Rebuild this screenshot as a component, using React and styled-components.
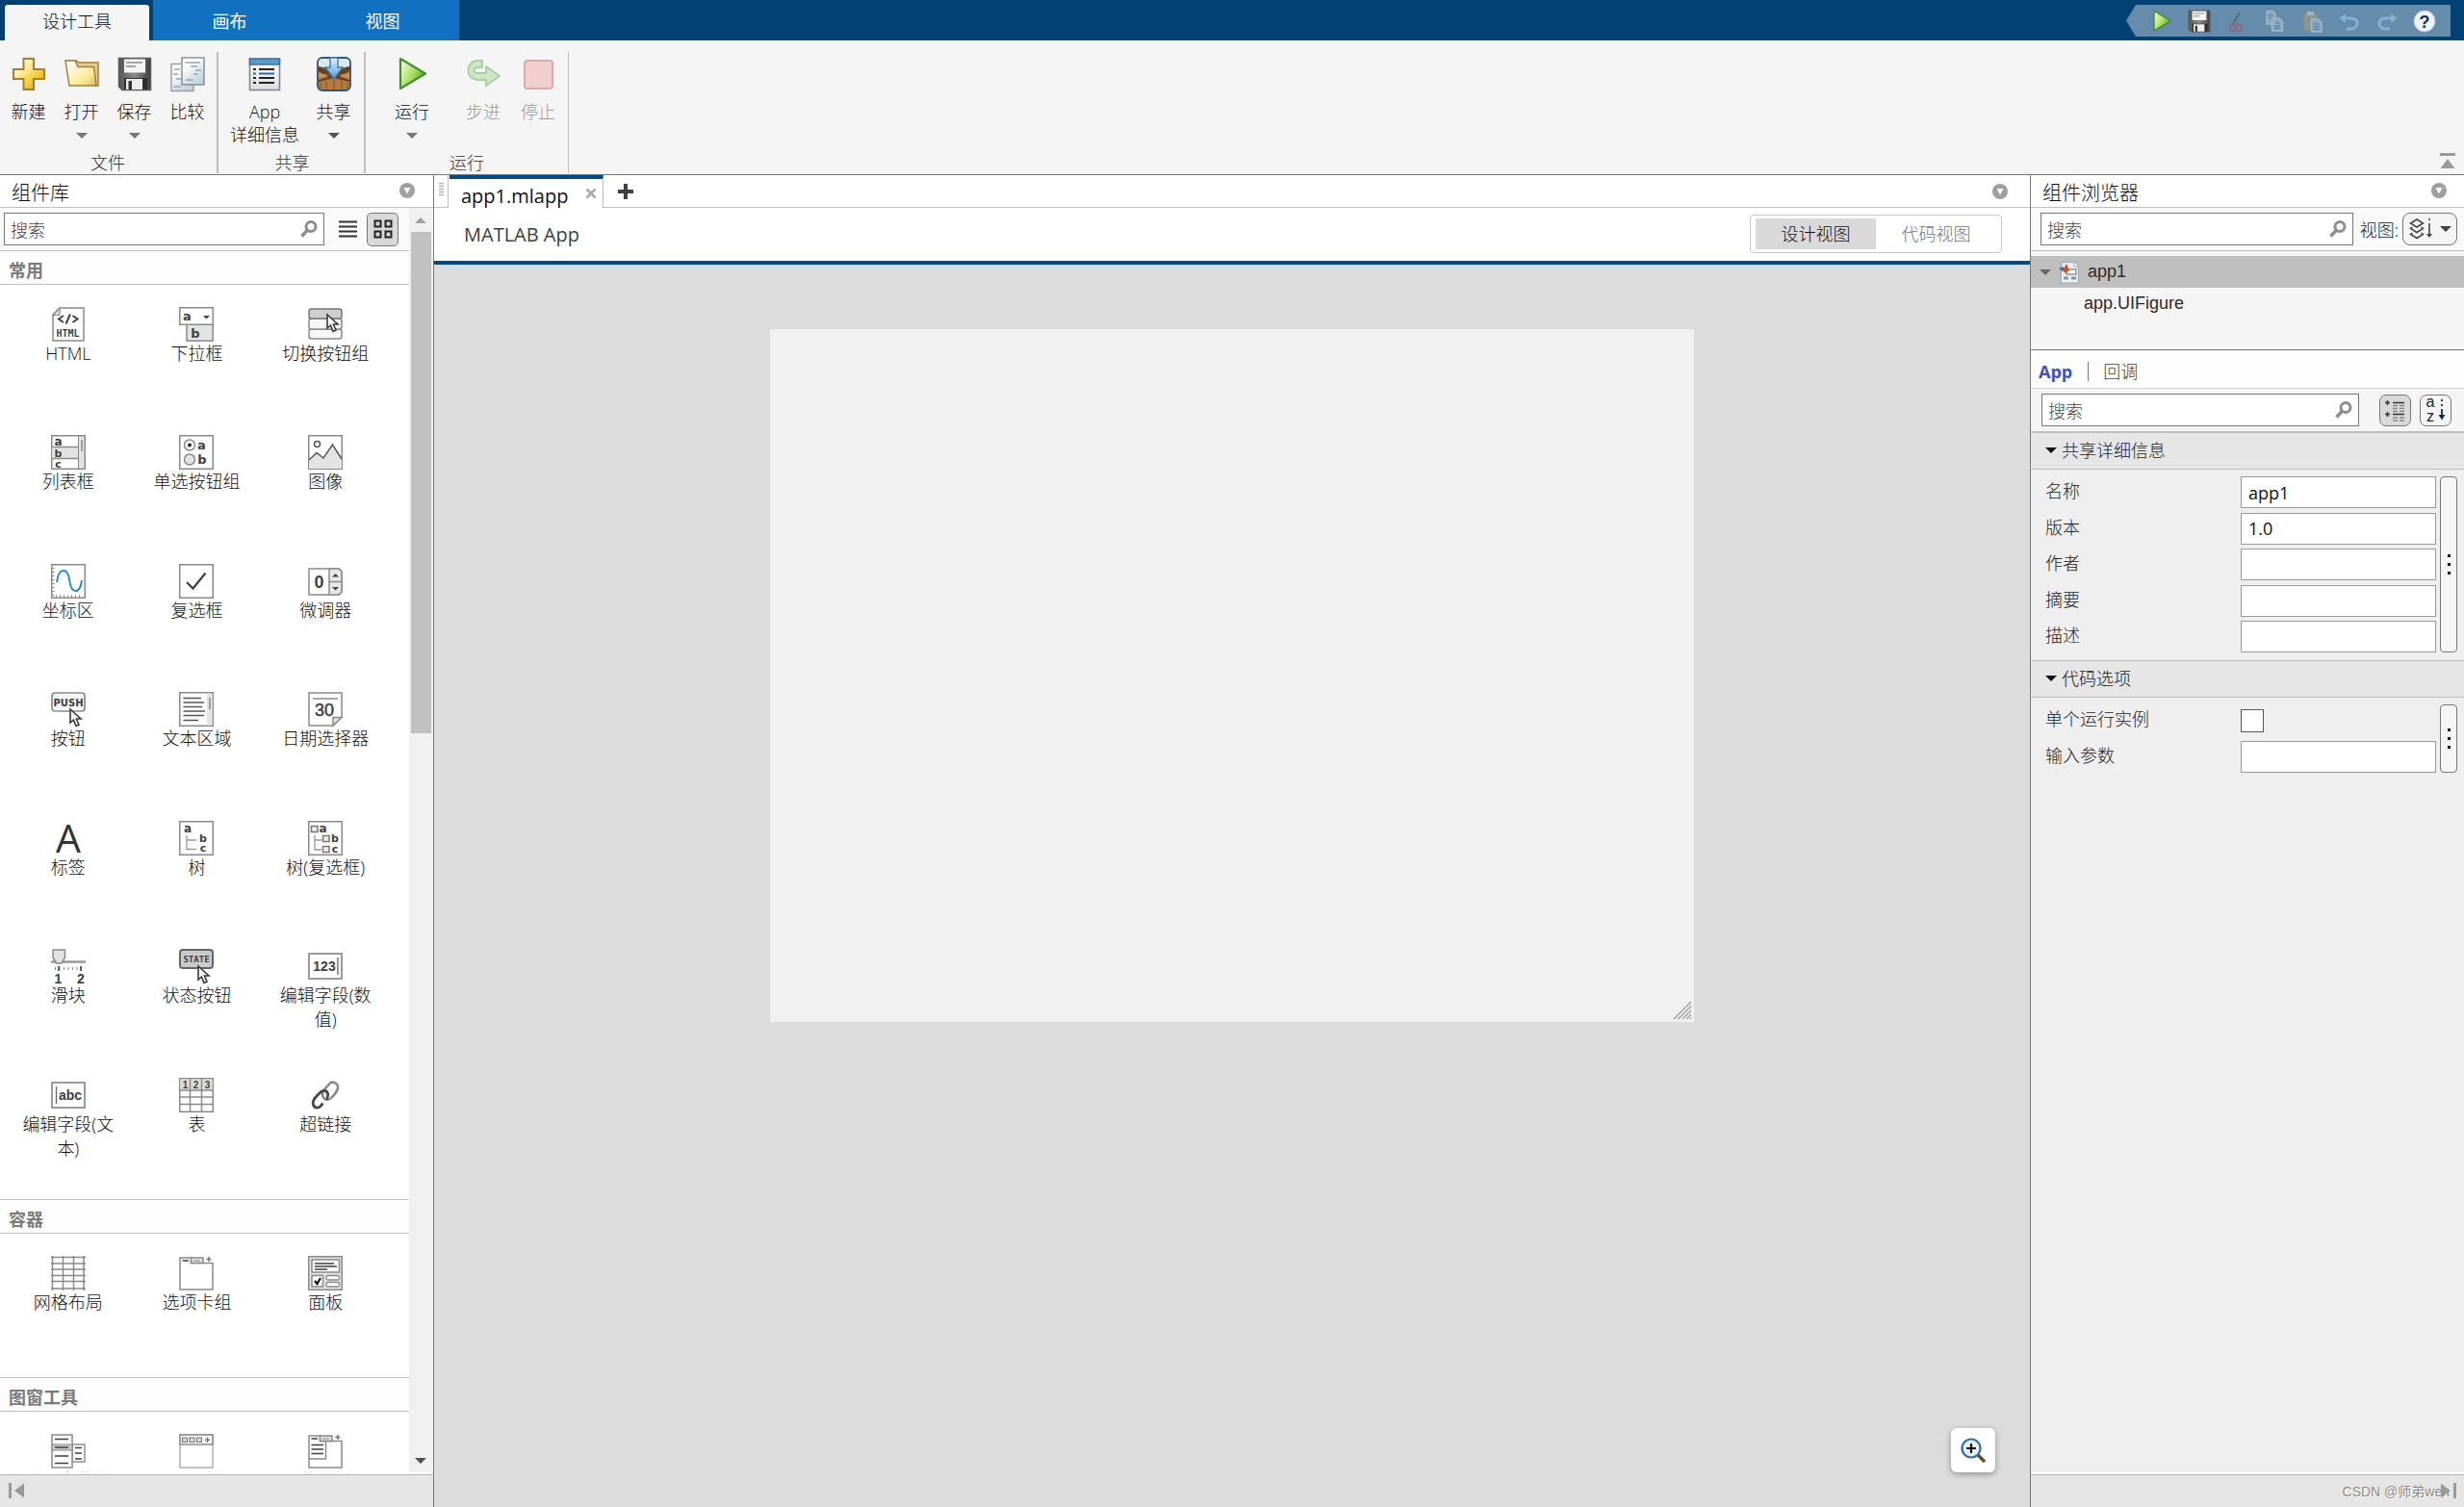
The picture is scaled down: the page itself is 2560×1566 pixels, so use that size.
import React, { useState } from 'react';
import styled, { createGlobalStyle, css } from 'styled-components';

const GlobalStyle = createGlobalStyle`
  * {
    box-sizing: border-box;
  }

  body {
    margin: 0;
    overflow: hidden;
  }

  body, button, input {
    font-family: "Open Sans", "Noto Sans CJK SC", sans-serif;
    font-size: 18px;
    font-weight: 300;
    color: #111;
  }

  button {
    padding: 0;
    border: 0;
    background: none;
  }

  svg {
    display: block;
    flex: none;
    overflow: visible;
  }
`;

const INK = '#404040';
const EDGE = '#8a8a8a';

/* ---------- icons ---------- */

const Svg = ({ size = 36, box = '0 0 36 36', children }) => (
  <svg width={size} height={size} viewBox={box} fill="none" aria-hidden="true">{children}</svg>
);

const Glyph = ({ x, y, size = 11, fill = INK, weight = 700, font = 'DejaVu Sans', children }) => (
  <text x={x} y={y} fontSize={size} fontWeight={weight} fontFamily={font} fill={fill} textAnchor="middle">
    {children}
  </text>
);

const Frame = ({ fill = '#fff' }) => (
  <rect x="0.75" y="0.75" width="34.5" height="34.5" fill={fill} stroke={EDGE} strokeWidth="1.5" />
);

const Cursor = ({ x, y }) => (
  <path
    transform={`translate(${x} ${y})`}
    d="M0 0 V14 L3.4 11 L6 17.4 L9 16 L6.4 10 H11 Z"
    fill="#fff"
    stroke="#3a3a3a"
    strokeWidth="1.6"
  />
);

const HtmlIcon = () => (
  <Svg>
    <path d="M9 1 H34 V35 H2 V8 Z" fill="#fff" stroke={EDGE} strokeWidth="1.5" />
    <path d="M2 8.5 H9 V1 Z" fill="#e0e0e0" stroke={EDGE} strokeWidth="1.2" />
    <path d="M13 9 L8 12.5 L13 16 M22.5 9 L27.5 12.5 L22.5 16 M20 7.5 L15.5 17.5" stroke={INK} strokeWidth="2" />
    <Glyph x="17.5" y="30.5" size="10" font="DejaVu Sans Mono">HTML</Glyph>
  </Svg>
);

const DropDownIcon = () => (
  <Svg>
    <rect x="8" y="18" width="27.2" height="17.2" fill="#e3e3e3" stroke={EDGE} strokeWidth="1.5" />
    <rect x="0.75" y="0.75" width="34.5" height="17.5" fill="#fff" stroke={EDGE} strokeWidth="1.5" />
    <Glyph x="8.5" y="13.5" size="13">a</Glyph>
    <Glyph x="17" y="31.5" size="13">b</Glyph>
    <path d="M25 9 H32 L28.5 12.5 Z" fill={INK} />
  </Svg>
);

const ToggleGroupIcon = () => (
  <Svg>
    <rect x="1" y="23" width="34" height="10" rx="2.5" fill="#f7f7f7" stroke={EDGE} strokeWidth="1.5" />
    <rect x="1" y="12" width="34" height="11" rx="2.5" fill="#f7f7f7" stroke={EDGE} strokeWidth="1.5" />
    <rect x="1" y="2" width="34" height="10" rx="2.5" fill="#cfcfcf" stroke="#777" strokeWidth="1.5" />
    <Cursor x={20} y={8} />
  </Svg>
);

const ListBoxIcon = () => (
  <Svg>
    <Frame />
    <rect x="1" y="12.5" width="28" height="12" fill="#e3e3e3" />
    <path d="M1 12.5 H29 M1 24.5 H29" stroke={EDGE} strokeWidth="1.5" />
    <rect x="28.5" y="1" width="6.5" height="34" fill="#e3e3e3" stroke={EDGE} />
    <path d="M32 5 V17" stroke={EDGE} strokeWidth="1.5" />
    <Glyph x="7.5" y="10.5" size="12">a</Glyph>
    <Glyph x="7.5" y="22.5" size="11">b</Glyph>
    <Glyph x="7.5" y="33.5" size="11">c</Glyph>
  </Svg>
);

const RadioGroupIcon = () => (
  <Svg>
    <Frame />
    <circle cx="11" cy="10.5" r="5.5" fill="#fff" stroke={EDGE} strokeWidth="1.5" />
    <circle cx="11" cy="10.5" r="2" fill="#222" />
    <circle cx="11" cy="25.5" r="5.5" fill="#e3e3e3" stroke={EDGE} strokeWidth="1.5" />
    <Glyph x="23.5" y="14.5" size="13">a</Glyph>
    <Glyph x="24" y="30" size="13">b</Glyph>
  </Svg>
);

const ImageIcon = () => (
  <Svg>
    <Frame />
    <path d="M1 26 L9 18.5 L16 24 L25.5 10 L35 25 V35 H1 Z" fill="#e3e3e3" />
    <path d="M1 26 L9 18.5 L16 24 L25.5 10 L35 25" stroke="#555" strokeWidth="1.5" />
    <circle cx="9.5" cy="9.5" r="3" stroke="#555" strokeWidth="1.5" />
  </Svg>
);

const AxesIcon = () => (
  <Svg>
    <Frame />
    <path d="M2.5 4 V33" stroke="#777" strokeWidth="2" strokeDasharray="1 3" />
    <path d="M5 33.5 H32" stroke="#777" strokeWidth="2" strokeDasharray="1 3" />
    <path d="M6 19 C8 3 17 4 19 16 C21 32 30 32 32 17" stroke="#2b8acb" strokeWidth="2" />
  </Svg>
);

const CheckBoxIcon = () => (
  <Svg>
    <Frame />
    <path d="M8 19 L14.5 25.5 L27.5 9.5" stroke={INK} strokeWidth="2.2" />
  </Svg>
);

const SpinnerIcon = () => (
  <Svg>
    <path d="M1 5 H32 L35 8 V29 L32 32 H1 Z" fill="#fff" stroke={EDGE} strokeWidth="1.5" />
    <path d="M22 5 H32 L35 8 V29 L32 32 H22 Z" fill="#e8e8e8" stroke={EDGE} strokeWidth="1.5" />
    <path d="M22 18.5 H35" stroke={EDGE} strokeWidth="1.5" />
    <path d="M25 13.5 H32 L28.5 10 Z M25 24 H32 L28.5 27.5 Z" fill={INK} />
    <Glyph x="11.5" y="25" size="18" font="Liberation Sans">0</Glyph>
  </Svg>
);

const PushIcon = () => (
  <Svg>
    <rect x="1" y="1" width="34" height="19" rx="3" fill="#f5f5f5" stroke={EDGE} strokeWidth="1.7" />
    <Glyph x="18" y="14.5" size="10">PUSH</Glyph>
    <Cursor x={20} y={18} />
  </Svg>
);

const StateIcon = () => (
  <Svg>
    <rect x="1" y="1" width="34" height="19" rx="3" fill="#cacaca" stroke="#666" strokeWidth="2" />
    <Glyph x="18" y="14" size="9" font="DejaVu Sans Mono">STATE</Glyph>
    <Cursor x={20} y={18} />
  </Svg>
);

const TextAreaIcon = () => (
  <Svg>
    <Frame />
    <rect x="29" y="1.5" width="5.5" height="33" fill="#e3e3e3" />
    <path d="M32 6 V18" stroke={EDGE} strokeWidth="1.5" />
    <path
      d="M4.5 6.5 H23 M4.5 11 H26 M4.5 15.5 H24 M4.5 20 H27 M4.5 24.5 H26 M4.5 29.5 H20"
      stroke="#555"
      strokeWidth="1.7"
    />
  </Svg>
);

const DateIcon = () => (
  <Svg>
    <path d="M1 1 H35 V26 L26 35 H1 Z" fill="#fff" stroke={EDGE} strokeWidth="1.5" />
    <path d="M26 35 V26.5 H35 Z" fill="#e3e3e3" stroke={EDGE} strokeWidth="1.5" />
    <path d="M5 7 H31" stroke={EDGE} strokeWidth="1.5" />
    <text x="17" y="25" fontSize="18" fontWeight="400" fontFamily="Liberation Sans" fill={INK} stroke={INK} strokeWidth="0.5" textAnchor="middle">30</text>
  </Svg>
);

const LabelIcon = () => (
  <Svg>
    <Glyph x="18" y="33" size="41" weight={400} fill="#333" font="Open Sans">A</Glyph>
  </Svg>
);

const TreeIcon = () => (
  <Svg>
    <Frame />
    <path d="M8 15 V29.5 H18 M8 20 H18" stroke="#999" strokeWidth="1.3" />
    <Glyph x="9" y="12" size="12">a</Glyph>
    <Glyph x="25" y="22" size="11">b</Glyph>
    <Glyph x="25" y="32" size="11">c</Glyph>
  </Svg>
);

const CheckTreeIcon = () => (
  <Svg>
    <Frame />
    <path d="M7 15 V30 H14 M7 20 H14" stroke="#999" strokeWidth="1.3" />
    <path d="M3.5 5.5 H10 V11.5 H3.5 Z M15.5 15.5 H22 V21.5 H15.5 Z M15.5 26.5 H22 V32.5 H15.5 Z" fill="#eee" stroke="#777" strokeWidth="1.5" />
    <Glyph x="15.5" y="12" size="12">a</Glyph>
    <Glyph x="28" y="22" size="11">b</Glyph>
    <Glyph x="28" y="33" size="11">c</Glyph>
  </Svg>
);

const SliderIcon = () => (
  <Svg>
    <path d="M0 13.5 H36" stroke="#999" strokeWidth="2.5" />
    <path d="M2 1 H14.5 V9 L11 15 H5.5 L2 9 Z" fill="#e3e3e3" stroke={EDGE} strokeWidth="1.5" />
    <path d="M4 20.5 H32" stroke="#888" strokeWidth="3" strokeDasharray="1 3.5" />
    <path d="M8 18 V23 M31 18 V23" stroke={INK} strokeWidth="1.6" />
    <Glyph x="7.5" y="36" size="14" font="Liberation Sans">1</Glyph>
    <Glyph x="31" y="36" size="14" font="Liberation Sans">2</Glyph>
  </Svg>
);

const NumericIcon = () => (
  <Svg>
    <rect x="1" y="5" width="34" height="26" fill="#fff" stroke={EDGE} strokeWidth="1.7" />
    <Glyph x="17" y="22.5" size="14" font="Liberation Sans">123</Glyph>
    <path d="M31 9 V27" stroke="#666" strokeWidth="1.3" />
  </Svg>
);

const TextFieldIcon = () => (
  <Svg>
    <rect x="1" y="5" width="34" height="26" fill="#fff" stroke={EDGE} strokeWidth="1.7" />
    <Glyph x="20" y="23" size="14" font="Liberation Sans">abc</Glyph>
    <path d="M5.5 9 V27" stroke="#666" strokeWidth="1.3" />
  </Svg>
);

const TableIcon = () => (
  <Svg>
    <Frame />
    <rect x="1.5" y="1.5" width="33" height="11" fill="#dcdcdc" />
    <path d="M1 13 H35 M1 20 H35 M1 27.5 H35 M11.5 1 V35 M23.5 1 V35" stroke={EDGE} strokeWidth="1.5" />
    <Glyph x="6.5" y="10.5" size="10" font="Liberation Sans">1</Glyph>
    <Glyph x="17.5" y="10.5" size="10" font="Liberation Sans">2</Glyph>
    <Glyph x="29.5" y="10.5" size="10" font="Liberation Sans">3</Glyph>
  </Svg>
);

const LinkIcon = () => (
  <Svg>
    <path d="M16.5 21 C13 17 16 13.5 18.5 10.5 L22 6.5 C25 3 31.5 5 31 10.5 C30.5 14 28 17 25 20 C22 23.5 18.5 23.5 16.5 21" stroke={EDGE} strokeWidth="2.6" />
    <path d="M19 22.5 C21.5 19.5 21.5 14 17.5 13.5 C14 13 12 16 9 19 C6 22 4.5 25 5.5 28 C6.5 31.5 10.5 32 13 29.5 L15.5 26.5" stroke="#484848" strokeWidth="2.8" />
  </Svg>
);

const GridIcon = () => (
  <Svg>
    <path d="M1.5 0 V36 M12.5 0 V36 M23.5 0 V36 M34 0 V36 M0 1.5 H36 M0 8 H36 M0 14 H36 M0 20.5 H36 M0 26.5 H36 M0 34 H36" stroke={EDGE} strokeWidth="1.5" />
  </Svg>
);

const TabGroupIcon = () => (
  <Svg>
    <path d="M1 35 V2 H12.5 V7.5 H35 V35 Z" fill="#fff" stroke={EDGE} strokeWidth="1.5" />
    <rect x="12.5" y="2" width="12.5" height="5.5" fill="#e3e3e3" stroke={EDGE} strokeWidth="1.5" />
    <path d="M3.5 5 H10" stroke={INK} strokeWidth="1.5" />
    <path d="M15 5 H22" stroke="#999" strokeWidth="1.2" />
    <path d="M31 1 V6 M28.5 3.5 H33.5" stroke="#777" strokeWidth="1.5" />
  </Svg>
);

const PanelIcon = () => (
  <Svg>
    <Frame fill="#e3e3e3" />
    <path d="M4 4 H32.5 V17 H4 Z M4 20.5 H15.5 V32 H4 Z" fill="#fff" stroke={EDGE} strokeWidth="1.5" />
    <path d="M7 8 H27 M7 11 H30 M7 14 H20" stroke={INK} strokeWidth="1.4" />
    <path d="M7 26 L9.5 29 L13 23" stroke="#111" strokeWidth="2.2" />
    <rect x="19" y="20.5" width="13.5" height="4.5" rx="1.5" fill="#fff" stroke={EDGE} strokeWidth="1.3" />
    <rect x="19" y="27.5" width="13.5" height="4.5" rx="1.5" fill="#fff" stroke={EDGE} strokeWidth="1.3" />
  </Svg>
);

const ContextMenuIcon = () => (
  <Svg>
    <rect x="22" y="11" width="13" height="18" fill="#fff" stroke={EDGE} strokeWidth="1.4" />
    <rect x="1" y="1" width="21" height="34" fill="#fff" stroke={EDGE} strokeWidth="1.5" />
    <rect x="1" y="11" width="21" height="6" fill="#c9c9c9" stroke={EDGE} />
    <path d="M4 5.5 H18 M4 14 H18 M4 23 H18 M4 30.5 H18 M25 14.5 H32 M25 20 H32 M25 26 H32" stroke={INK} strokeWidth="1.5" />
  </Svg>
);

const ToolBarIcon = () => (
  <Svg>
    <rect x="1" y="1" width="34" height="34" fill="#fff" stroke="#b0b0b0" strokeWidth="1.5" />
    <rect x="1" y="1" width="34" height="10" fill="#fff" stroke={EDGE} strokeWidth="1.5" />
    <path d="M3.5 4 H8.5 V8.5 H3.5 Z M11 4 H16 V8.5 H11 Z M18.5 4 H23.5 V8.5 H18.5 Z" fill="#ddd" stroke="#777" strokeWidth="1.2" />
    <path d="M29.5 3.5 V9 M27 6.2 H32" stroke="#777" strokeWidth="1.5" />
  </Svg>
);

const MenuBarIcon = () => (
  <Svg>
    <path d="M1 2 H12.5 V7.5 H35 V35 H1 Z" fill="#fff" stroke={EDGE} strokeWidth="1.5" />
    <rect x="12.5" y="2" width="12.5" height="5.5" fill="#e3e3e3" stroke={EDGE} strokeWidth="1.5" />
    <path d="M1 26 H18.5 V8" stroke={EDGE} strokeWidth="1.5" />
    <path d="M3.5 5 H10 M3.5 11.5 H16 M3.5 16 H16 M3.5 20.5 H16" stroke={INK} strokeWidth="1.5" />
    <path d="M15 5 H22" stroke="#999" strokeWidth="1.2" />
    <path d="M31 1 V6 M28.5 3.5 H33.5" stroke="#777" strokeWidth="1.5" />
  </Svg>
);

const NewIcon = () => (
  <Svg>
    <defs>
      <linearGradient id="gold" x1="0" y1="0" x2="1" y2="1">
        <stop offset="0.2" stopColor="#fffbe6" />
        <stop offset="0.55" stopColor="#f9d94e" />
        <stop offset="1" stopColor="#d79a1a" />
      </linearGradient>
    </defs>
    <path d="M12.5 2 H23 V13 H34 V23 H23 V34 H12.5 V23 H2 V13 H12.5 Z" fill="url(#gold)" stroke="#a5802c" strokeWidth="2" />
  </Svg>
);

const OpenIcon = () => (
  <Svg>
    <defs>
      <linearGradient id="folder" x1="0" y1="0" x2="1" y2="1">
        <stop offset="0.2" stopColor="#fffdf0" />
        <stop offset="0.7" stopColor="#fbe98f" />
        <stop offset="1" stopColor="#d9b76a" />
      </linearGradient>
    </defs>
    <path d="M2 4 H12 L15 6 H35 V30 H32 L29 12 H3 Z" fill="#e2cb97" stroke="#a77f3a" strokeWidth="1.5" />
    <path d="M1 4 H11 L14 10.5 H30.5 L33 30 H5 Z" fill="url(#folder)" stroke="#a77f3a" strokeWidth="1.5" />
  </Svg>
);

const SaveIcon = ({ size }) => (
  <Svg size={size}>
    <defs>
      <linearGradient id="disk" x1="0" y1="0" x2="1" y2="0">
        <stop offset="0" stopColor="#555" />
        <stop offset="0.5" stopColor="#8b8b8b" />
        <stop offset="1" stopColor="#404040" />
      </linearGradient>
    </defs>
    <path d="M1.5 1.5 H34.5 V34.5 H5 L1.5 31 Z" fill="url(#disk)" stroke="#5a5a5a" strokeWidth="1.5" />
    <rect x="7" y="2.5" width="22" height="14" fill="#f4f4f4" />
    <path d="M9 6 H26 M9 10 H19" stroke="#8a8a8a" strokeWidth="1.6" />
    <path d="M7 22 H31 V34 H7 Z" fill="#2f2f2f" />
    <path d="M9 23 H26 V34 H9 Z" fill="#eee" />
    <path d="M11.5 25 H15 V34 H11.5 Z" fill="#333" />
  </Svg>
);

const CompareIcon = () => (
  <Svg>
    <defs>
      <linearGradient id="sheet" x1="0" y1="0" x2="0.6" y2="1">
        <stop offset="0.3" stopColor="#fff" />
        <stop offset="1" stopColor="#c3d3df" />
      </linearGradient>
    </defs>
    <rect x="1" y="7.5" width="23" height="28" fill="url(#sheet)" stroke="#999" strokeWidth="1.4" />
    <rect x="12" y="1" width="23" height="28" fill="url(#sheet)" stroke="#888" strokeWidth="1.4" />
    <path d="M15 6 H31 M21 10 H28 M26 14 H32 M24 18 H29 M16 24 H24 M4 13 H10 M3 18 H8 M6 23 H11 M3 31 H11" stroke="#9aa7b1" strokeWidth="1.5" />
  </Svg>
);

const DetailsIcon = () => (
  <Svg>
    <defs>
      <linearGradient id="details" x1="0" y1="0" x2="0" y2="1">
        <stop offset="0" stopColor="#fff" />
        <stop offset="1" stopColor="#dedede" />
      </linearGradient>
    </defs>
    <rect x="2.5" y="2.5" width="31" height="32" fill="url(#details)" stroke="#808790" strokeWidth="1.6" />
    <rect x="2.5" y="2" width="31" height="6" fill="#5c9ac9" stroke="#3d6d93" strokeWidth="1.4" />
    <path d="M6 13 H9 M6 22 H9 M6 27 H9 M12 13 H28 M12 22 H28 M12 27 H28" stroke="#222" strokeWidth="1.8" />
    <path d="M6 17.5 H9 M12 17.5 H28" stroke="#2d6ca3" strokeWidth="1.8" />
  </Svg>
);

const ShareIcon = () => (
  <Svg>
    <defs>
      <linearGradient id="arrow" x1="0" y1="0" x2="0" y2="1">
        <stop offset="0" stopColor="#e6f4fc" />
        <stop offset="1" stopColor="#4f9bd0" />
      </linearGradient>
    </defs>
    <rect x="1" y="1" width="34" height="34" rx="5" fill="#b27a45" stroke="#2c5877" strokeWidth="1.8" />
    <path d="M2 10 V6 Q2 2 6 2 H30 Q34 2 34 6 V10 Q18 14 2 10 Z" fill="#d9e8f2" />
    <path d="M2 10 L18 15 L34 10 V15 L24 21 L34 24 V26 L18 22 L2 26 V24 L12 21 L2 15 Z" fill="#6a3f1c" />
    <path d="M2 17 L13 19 L2 22 Z M34 17 L23 19 L34 22 Z" fill="#c89560" />
    <path d="M4 27 V33 M10 25.5 V34 M18 24.5 V34 M26 25.5 V34 M32 27 V33" stroke="#8b5829" strokeWidth="1.2" />
    <path d="M14 1 H22 V11 H27 L18 23 L9 11 H14 Z" fill="url(#arrow)" stroke="#3c7cab" strokeWidth="1.4" />
  </Svg>
);

const RunIcon = ({ size }) => (
  <Svg size={size}>
    <defs>
      <linearGradient id="run" x1="0" y1="0" x2="1" y2="0.6">
        <stop offset="0" stopColor="#fbfff0" />
        <stop offset="0.6" stopColor="#a9dc5c" />
        <stop offset="1" stopColor="#57a92b" />
      </linearGradient>
    </defs>
    <path d="M6 2 L32 17.5 L6 33 Z" fill="url(#run)" stroke="#45902e" strokeWidth="2.2" strokeLinejoin="round" />
  </Svg>
);

const StepIcon = () => (
  <Svg>
    <path
      d="M17 4 H12 C-1 5 -1 23 12 24 H21 V30 L35 20 L21 10 V17 H13 C7 17 7 11 13 11 H17 Z"
      fill="#cfe6c6"
      stroke="#a9cfa0"
      strokeWidth="1.8"
      strokeLinejoin="round"
    />
  </Svg>
);

const StopIcon = () => (
  <Svg>
    <rect x="4" y="4" width="29" height="29" rx="3" fill="#f1cfcf" stroke="#dcaaaa" strokeWidth="2" />
  </Svg>
);

const CutIcon = () => (
  <Svg size={24} box="0 0 24 24">
    <path d="M15 3 L8 15 M12 14 L14 16" stroke="#4f6c88" strokeWidth="2" />
    <ellipse cx="7" cy="19" rx="2.5" ry="3.5" stroke="#8d6685" strokeWidth="1.8" />
    <ellipse cx="14" cy="19" rx="2.5" ry="3.5" stroke="#8d6685" strokeWidth="1.8" />
  </Svg>
);

const CopyIcon = () => (
  <Svg size={24} box="0 0 24 24">
    <path d="M4 1.5 H10 L13 4 V15 H4 Z M9.5 9 H17 L20.5 12 V22 H9.5 Z" fill="#86a5bf" stroke="#9fb8cc" strokeWidth="1.3" />
    <path d="M6 6 H10 M6 9 H9 M12 14 H17 M12 17 H18 M12 19.5 H18" stroke="#5a7f9e" strokeWidth="1.2" />
  </Svg>
);

const PasteIcon = () => (
  <Svg size={24} box="0 0 24 24">
    <rect x="3" y="4" width="15" height="18" rx="1" fill="#8a9690" stroke="#7b8c90" strokeWidth="1.3" />
    <path d="M7 2 H14 V6 H7 Z" fill="#9fb5c6" />
    <path d="M11.5 10 H18 L22 13 V23 H11.5 Z" fill="#86a5bf" stroke="#9fb8cc" strokeWidth="1.3" />
    <path d="M14 15 H19 M14 18 H19.5 M14 20.5 H19.5" stroke="#5a7f9e" strokeWidth="1.2" />
  </Svg>
);

const UndoIcon = ({ flip }) => (
  <Svg size={24} box="0 0 24 24">
    <g transform={flip ? 'translate(24 0) scale(-1 1)' : undefined}>
      <path d="M7 9 H14 C22 9 22 20 14 20 H9" stroke="#83b0d3" strokeWidth="3" />
      <path d="M1.5 9 L8 4 V14 Z" fill="#83b0d3" />
    </g>
  </Svg>
);

const HelpIcon = () => (
  <Svg size={24} box="0 0 24 24">
    <circle cx="12" cy="12" r="11" fill="#eef3f7" stroke="#b4c5d3" />
    <Glyph x="12" y="18.5" size="18" fill="#14304e" font="Liberation Sans">?</Glyph>
  </Svg>
);

const MagnifierIcon = () => (
  <Svg size={20} box="0 0 20 20">
    <circle cx="12" cy="7.5" r="5" stroke="#8e8e8e" strokeWidth="3" />
    <path d="M8.5 11 L2.5 17.5" stroke="#8e8e8e" strokeWidth="3.4" />
  </Svg>
);

const PanelMenuIcon = () => (
  <Svg size={16} box="0 0 16 16">
    <circle cx="8" cy="8" r="8" fill="#a0a0a0" />
    <path d="M4.5 5 H11.5 L8 11.5 Z" fill="#fff" />
  </Svg>
);

const ListViewIcon = () => (
  <Svg size={20} box="0 0 20 20">
    <path d="M0 2.5 H19 M0 7.5 H19 M0 12.5 H19 M0 17.5 H19" stroke="#333" strokeWidth="2" />
  </Svg>
);

const GridViewIcon = () => (
  <Svg size={20} box="0 0 20 20">
    <path d="M1.5 1.5 H7.5 V7.5 H1.5 Z M12.5 1.5 H18.5 V7.5 H12.5 Z M1.5 12.5 H7.5 V18.5 H1.5 Z M12.5 12.5 H18.5 V18.5 H12.5 Z" stroke="#222" strokeWidth="2" />
  </Svg>
);

const CollapseIcon = ({ turn = 0 }) => (
  <Svg size={18} box="0 0 18 18">
    <g transform={`rotate(${turn} 9 9)`} fill="#9a9a9a">
      <rect x="1" y="1" width="16" height="3" />
      <path d="M9 7 L16.5 17 H1.5 Z" />
    </g>
  </Svg>
);

const LayersIcon = () => (
  <Svg size={26} box="0 0 26 26">
    <path d="M9 3 L15.5 7 L9 11 L2.5 7 Z" fill="#f5f5f5" stroke="#444" strokeWidth="1.5" />
    <path d="M4.5 11 L2.5 12.5 L9 16.5 L15.5 12.5 L13.5 11 M4.5 17 L2.5 18.5 L9 22.5 L15.5 18.5 L13.5 17" stroke="#444" strokeWidth="1.5" />
    <path d="M22 2 V4 M22 7 V20" stroke="#444" strokeWidth="1.6" />
    <path d="M19 18 H25 L22 22 Z" fill="#444" />
  </Svg>
);

const AppFileIcon = () => (
  <Svg size={24} box="0 0 24 24">
    <path d="M4 1.5 H17 L21.5 6 V23 H3 Z" fill="#e9eff3" stroke="#9eabb5" strokeWidth="1.2" />
    <path d="M17 1.5 V6 H21.5" fill="#fff" stroke="#9eabb5" />
    <path d="M9 9 H19 V14 H9 Z" fill="#fff" stroke="#8b949b" strokeWidth="1.5" />
    <path d="M6 18 H11 M14 18 H19" stroke="#8b949b" strokeWidth="3" />
    <path d="M1 8 L5 6 L7 8 L5 11 Z" fill="#3778b0" />
    <path d="M5 10 L9 3 L12 10 L8 13 Z" fill="#c9532b" />
  </Svg>
);

const CategoryIcon = () => (
  <Svg size={24} box="0 0 24 24">
    <path d="M1 4.5 H6 M3.5 2 V7 M1 16.5 H6 M3.5 14 V19" stroke="#333" strokeWidth="1.5" />
    <path d="M9 4.5 H21 M9 16.5 H21" stroke="#333" strokeWidth="1.5" />
    <path d="M9 7.5 H14 M16 7.5 H21 M9 10.5 H14 M16 10.5 H21 M9 13.5 H14 M16 13.5 H21 M9 20 H14 M16 20 H21 M9 23 H14 M16 23 H21" stroke="#8a8a8a" strokeWidth="1.3" />
  </Svg>
);

const SortIcon = () => (
  <Svg size={28} box="0 0 28 28">
    <Glyph x="8" y="10.5" size="16" weight={400} font="Liberation Sans" fill="#222">a</Glyph>
    <Glyph x="8" y="25.5" size="16" weight={400} font="Liberation Sans" fill="#222">z</Glyph>
    <path d="M20 3 V5 M20 8 V10 M20 13 V20" stroke="#12304f" strokeWidth="1.8" />
    <path d="M16.5 19 H23.5 L20 24.5 Z" fill="#12304f" />
  </Svg>
);

const ZoomIcon = () => (
  <Svg size={28} box="0 0 28 28">
    <path d="M18 18 L26 26" stroke="#6b4a25" strokeWidth="3.4" />
    <circle cx="12" cy="12" r="9.5" fill="#e8eff6" stroke="#2f6ea8" strokeWidth="2.2" />
    <path d="M12 7 V17 M7 12 H17" stroke="#111" strokeWidth="2.2" />
  </Svg>
);

const GripIcon = () => (
  <Svg size={20} box="0 0 20 20">
    <path d="M1 19 L19 1 M5.5 19 L19 5.5 M10 19 L19 10 M14 19 L19 14 M17.5 19 L19 17.5" stroke="#a0a0a0" strokeWidth="1.4" />
  </Svg>
);

/* ---------- shared parts ---------- */

const Caret = styled.span`
  width: 0;
  height: 0;
  flex: none;
  border: 6px solid transparent;
  border-top-color: ${(p) => p.$color || '#777'};
  border-bottom: 0;
`;

const IconButton = styled.button`
  display: flex;
  align-items: center;
  justify-content: center;
  flex: none;
`;

const TitleText = styled.span`
  padding-top: 5px;
  font-size: 20px;
  line-height: 28px;
`;

const PanelTitle = styled.header`
  display: flex;
  align-items: center;
  justify-content: space-between;
  flex: none;
  height: 34px;
  padding: 0 ${(p) => p.$right}px 2px 12px;
  border-bottom: 1px solid #bfbfbf;
  background: #fff;

  ${TitleText} {
    padding-top: 7px;
    line-height: 24px;
  }
`;

const SearchWrap = styled.div`
  display: flex;
  align-items: center;
  flex: 1;
  min-width: 0;
  height: 34px;
  padding-right: 5px;
  border: 1px solid #777;
  background: #fff;
`;

const SearchInput = styled.input`
  flex: 1;
  min-width: 0;
  height: 100%;
  padding: 1px 6px 0;
  border: 0;
  outline: 0;
  background: transparent;

  &::placeholder {
    color: #444;
    opacity: 1;
  }
`;

const Search = ({ label }) => (
  <SearchWrap>
    <SearchInput type="search" placeholder="搜索" aria-label={label} />
    <MagnifierIcon />
  </SearchWrap>
);

/* ---------- top ---------- */

const Page = styled.div`
  display: flex;
  flex-direction: column;
  height: 100vh;
  background: #f5f5f5;
`;

const TitleBar = styled.div`
  display: flex;
  align-items: flex-end;
  flex: none;
  height: 42px;
  padding-left: 5px;
  background: #004073;
`;

const RibbonTab = styled.button`
  width: 159px;
  height: 42px;
  background: #1171c0;
  color: #fff;
  font-weight: 400;

  ${(p) => p.$active && css`
    width: 150px;
    height: 37px;
    padding-bottom: 6px;
    margin-right: 4px;
    border-radius: 3px 3px 0 0;
    background: #f5f5f5;
    color: #111;
    font-weight: 300;
  `}
`;

const QuickAccess = styled.div`
  display: flex;
  align-items: center;
  gap: 15px;
  height: 33px;
  margin: 0 14px 4px auto;
  padding: 0 15px 0 25px;
  background: #668cab;
  clip-path: polygon(10px 0, 100% 0, 100% 100%, 10px 100%, 0 50%);
`;

const Ribbon = styled.div`
  display: flex;
  flex: none;
  height: 140px;
  padding-top: 12px;
  border-bottom: 1px solid #777;
  background: #f5f5f5;
`;

const RibbonSection = styled.section`
  display: flex;
  flex-direction: column;
  justify-content: space-between;
  height: 126px;
  padding: 5px ${(p) => p.$pad[1]}px 0 ${(p) => p.$pad[0]}px;
  border-right: ${(p) => p.$rule}px solid #bfbfbf;
`;

const RibbonButtons = styled.div`
  display: flex;
`;

const RibbonButton = styled.button`
  display: flex;
  flex-direction: column;
  align-items: center;
  width: ${(p) => p.$width}px;
  line-height: 24px;
  white-space: nowrap;

  svg {
    margin-bottom: 9px;
  }

  ${Caret} {
    margin-top: 10px;
  }

  &:disabled {
    color: #999;
  }
`;

const RibbonLabel = styled.div`
  color: #333;
  line-height: 22px;
  text-align: center;
`;

const RibbonEnd = styled.div`
  display: flex;
  align-items: flex-end;
  margin-left: auto;
  padding: 0 8px 5px 0;
`;

/* ---------- library ---------- */

const Main = styled.main`
  display: grid;
  grid-template-columns: 451px minmax(0, 1fr) 451px;
  flex: 1;
  min-height: 0;
`;

const LibraryPanel = styled.aside`
  display: flex;
  flex-direction: column;
  min-height: 0;
  border-right: 1px solid #777;
  background: #fff;
`;

const LibraryBody = styled.div`
  display: flex;
  flex: 1;
  min-height: 0;
  padding-right: 1px;
`;

const LibraryScroll = styled.div`
  flex: 1;
  min-width: 0;
  overflow: hidden;
`;

const LibraryTools = styled.div`
  display: flex;
  align-items: center;
  height: 44px;
  padding: 0 11px 0 4px;
  background: #fafafa;

  ${IconButton} {
    width: 33px;
    height: 35px;
    border: 1px solid transparent;
    border-radius: 5px;
  }
`;

const ViewButton = styled(IconButton)`
  margin-left: ${(p) => p.$gap}px;

  &&[aria-pressed='true'] {
    border-color: #777;
    background: #d9d9d9;
  }
`;

const GroupTitle = styled.h2`
  height: 36px;
  margin: 0;
  padding-left: 9px;
  border: solid #bfbfbf;
  border-width: 1px 0;
  background: #fdfdfd;
  color: #7a7a7a;
  font-size: 18px;
  font-weight: 700;
  line-height: 40px;
`;

const GroupGrid = styled.div`
  display: grid;
  grid-template-columns: repeat(3, 1fr);
  grid-auto-rows: 1fr;
  height: ${(p) => p.$height}px;
  padding: 0 20px 0 4px;
  margin-bottom: 16px;
`;

const Tile = styled.div`
  display: flex;
  flex-direction: column;
  align-items: center;
  padding: 23px 18px 0;
  line-height: 25px;
  text-align: center;
`;

const ScrollBar = styled.div`
  display: flex;
  flex-direction: column;
  align-items: center;
  flex: none;
  width: 24px;
  background: #f0f0f0;
`;

const ScrollArrow = styled(IconButton)`
  width: 24px;
  height: 25px;

  ${Caret} {
    transform: ${(p) => (p.$up ? 'rotate(180deg)' : 'none')};
  }
`;

const ScrollThumb = styled.div`
  flex: 521;
  width: 21px;
  background: #c1c1c1;
`;

const ScrollRest = styled.div`
  flex: 742;
`;

const StatusBar = styled.footer`
  display: flex;
  align-items: center;
  justify-content: ${(p) => (p.$end ? 'flex-end' : 'flex-start')};
  flex: none;
  height: 36px;
  margin-top: auto;
  padding: 0 7px 0 8px;
  border-top: 2px solid #fff;
  background: #e6e6e6;
  box-shadow: inset 0 1px 0 #b5b5b5;
`;

const Credit = styled.span`
  margin-right: -10px;
  color: #8c8c8c;
  font-family: "Liberation Sans", "Noto Sans CJK SC", sans-serif;
  font-size: 14px;
  font-weight: 400;
  text-shadow: 1px 1px 0 #fff;
`;

/* ---------- editor ---------- */

const Editor = styled.section`
  display: flex;
  flex-direction: column;
  position: relative;
  min-width: 0;
  background: #fff;
`;

const DocTabs = styled.div`
  display: flex;
  flex: none;
  height: 34px;
`;

const DocGrip = styled.div`
  width: 15px;
  padding: 8px 4px 11px 5px;
  margin-right: 1px;
  border: solid #bfbfbf;
  border-width: 0 1px 1px 0;

  &::before {
    content: '';
    display: block;
    height: 14px;
    background: repeating-linear-gradient(#b0b0b0 0 1px, #eee 1px 3px);
  }
`;

const DocTab = styled.div`
  display: flex;
  align-items: center;
  justify-content: space-between;
  width: 160px;
  padding: 0 6px 0 12px;
  border-top: 4px solid #004b87;
  border-right: 1px solid #bfbfbf;
  font-weight: 400;
`;

const DocRest = styled.div`
  display: flex;
  align-items: center;
  justify-content: space-between;
  flex: 1;
  padding: 0 23px 0 14px;
  border-bottom: 1px solid #bfbfbf;
`;

const DocHeader = styled.div`
  display: flex;
  align-items: center;
  justify-content: space-between;
  flex: none;
  height: 59px;
  padding: 0 29px 1px 31px;
  border-bottom: 4px solid #004b87;
  color: #404040;
  font-size: 20px;
  font-weight: 400;
`;

const ModeSwitch = styled.div`
  display: flex;
  width: 262px;
  height: 40px;
  padding: 3px 5px;
  border: 1px solid #c8c8c8;
  border-radius: 4px;
`;

const ModeButton = styled.button`
  flex: 1;
  padding-bottom: 2px;
  background: ${(p) => (p.$active ? '#d9d9d9' : 'transparent')};
  color: ${(p) => (p.$active ? '#111' : '#777')};
`;

const Canvas = styled.div`
  display: flex;
  align-items: flex-start;
  justify-content: center;
  flex: 1;
  padding-top: 67px;
  background: #dcdcdc;
`;

const Figure = styled.div`
  display: flex;
  align-items: flex-end;
  justify-content: flex-end;
  width: 960px;
  height: 720px;
  padding: 2px;
  background: #f0f0f0;
`;

const ZoomButton = styled(IconButton)`
  position: absolute;
  right: 36px;
  bottom: 36px;
  width: 46px;
  height: 46px;
  border-radius: 6px;
  background: #fff;
  box-shadow: 0 2px 6px rgba(0, 0, 0, 0.35);
`;

/* ---------- browser ---------- */

const BrowserPanel = styled.aside`
  display: flex;
  flex-direction: column;
  min-height: 0;
  border-left: 1px solid #777;
  background: #efefef;
`;

const BrowserTools = styled.div`
  display: flex;
  align-items: center;
  flex: none;
  height: 45px;
  padding: 0 7px 0 10px;
  border-bottom: 1px solid #bfbfbf;
  background: #f9f9f9;
  color: #222;
`;

const FilterLabel = styled.span`
  margin: 0 4px 0 7px;
`;

const FilterButton = styled(IconButton)`
  gap: 7px;
  width: 57px;
  height: 34px;
  border: 1px solid #777;
  border-radius: 8px;
  background: #f5f5f5;
`;

const Tree = styled.div`
  flex: none;
  height: 103px;
  padding-top: 5px;
  border-bottom: 1px solid #777;
  background: #f5f5f5;
  color: #2b2b2b;
  font-family: "Liberation Sans", "Noto Sans CJK SC", sans-serif;
`;

const TreeItem = styled.div`
  display: flex;
  align-items: center;
  gap: 7px;
  height: 33px;
  padding-left: ${(p) => p.$indent}px;
  background: ${(p) => (p.$selected ? '#bfbfbf' : 'transparent')};
`;

const InspectorTabs = styled.div`
  display: flex;
  align-items: center;
  flex: none;
  height: 40px;
  padding: 5px 0 0 8px;
  border-bottom: 1px solid #d4d4d4;
  background: #fdfdfd;
`;

const InspectorTab = styled.button`
  color: ${(p) => (p.$active ? '#4350c0' : '#444')};
  font-weight: ${(p) => (p.$active ? 700 : 300)};

  & + & {
    margin-left: 16px;
    padding-left: 15px;
    border-left: 1px solid #777;
    line-height: 20px;
  }
`;

const InspectorTools = styled.div`
  display: flex;
  align-items: center;
  gap: 9px;
  flex: none;
  height: 46px;
  padding: 0 13px 0 11px;
  border-bottom: 2px solid #bfbfbf;
  background: #f5f5f5;

  ${SearchWrap} {
    margin-right: 12px;
  }
`;

const SquareButton = styled(IconButton)`
  width: 33px;
  height: 33px;
  border: 1px solid #777;
  border-radius: 7px;
  background: ${(p) => (p.$active ? '#d9d9d9' : '#f5f5f5')};
`;

const Category = styled.h3`
  display: flex;
  align-items: center;
  gap: 5px;
  flex: none;
  height: 38px;
  margin: 0;
  padding: 0 0 2px 15px;
  border-bottom: 1px solid #bfbfbf;
  background: #e6e6e6;
  color: #222;
  font-size: 18px;
  font-weight: 300;
  line-height: 34px;

  & ~ & {
    height: 39px;
    border-top: 1px solid #bfbfbf;
  }
`;

const Properties = styled.div`
  display: flex;
  gap: 4px;
  flex: none;
  height: ${(p) => p.$height}px;
  margin: 7px 7px 8px 15px;
`;

const PropertyList = styled.div`
  display: flex;
  flex: 1;
  flex-direction: column;
  justify-content: space-between;
`;

const Property = styled.div`
  display: flex;
  align-items: center;
  height: 33px;
  color: #222;

  label {
    flex: 1;
    line-height: 28px;
    padding-bottom: 3px;
  }
`;

const ValueSlot = styled.div`
  display: flex;
  width: 203px;
`;

const ValueInput = styled.input`
  width: 100%;
  height: 33px;
  padding: 0 7px;
  border: 1px solid #999;
  background: #fff;
  font-weight: 400;
`;

const Tick = styled.input`
  appearance: none;
  width: 24px;
  height: 24px;
  margin: 0;
  border: 1px solid #555;
  background: #fff;

  &:checked {
    background: #555;
  }
`;

const MoreButton = styled(IconButton)`
  flex-direction: column;
  gap: 6px;
  width: 18px;
  border: 1px solid #777;
  border-radius: 4px;
  background: #f5f5f5;

  i {
    width: 3px;
    height: 3px;
    background: #111;
  }
`;

const GROUPS = [
  {
    title: '常用',
    height: 934,
    items: [
      ['HTML', HtmlIcon],
      ['下拉框', DropDownIcon],
      ['切换按钮组', ToggleGroupIcon],
      ['列表框', ListBoxIcon],
      ['单选按钮组', RadioGroupIcon],
      ['图像', ImageIcon],
      ['坐标区', AxesIcon],
      ['复选框', CheckBoxIcon],
      ['微调器', SpinnerIcon],
      ['按钮', PushIcon],
      ['文本区域', TextAreaIcon],
      ['日期选择器', DateIcon],
      ['标签', LabelIcon],
      ['树', TreeIcon],
      ['树(复选框)', CheckTreeIcon],
      ['滑块', SliderIcon],
      ['状态按钮', StateIcon],
      ['编辑字段(数值)', NumericIcon],
      ['编辑字段(文本)', TextFieldIcon],
      ['表', TableIcon],
      ['超链接', LinkIcon],
    ],
  },
  {
    title: '容器',
    height: 133,
    items: [
      ['网格布局', GridIcon],
      ['选项卡组', TabGroupIcon],
      ['面板', PanelIcon],
    ],
  },
  {
    title: '图窗工具',
    height: 133,
    items: [
      ['上下文菜单', ContextMenuIcon],
      ['工具栏', ToolBarIcon],
      ['菜单栏', MenuBarIcon],
    ],
  },
];

const TopRibbon = () => (
  <>
    <TitleBar>
      <RibbonTab $active>设计工具</RibbonTab>
      <RibbonTab>画布</RibbonTab>
      <RibbonTab>视图</RibbonTab>
      <QuickAccess>
        <IconButton aria-label="运行"><RunIcon size={24} /></IconButton>
        <IconButton aria-label="保存"><SaveIcon size={24} /></IconButton>
        <IconButton aria-label="剪切" disabled><CutIcon /></IconButton>
        <IconButton aria-label="复制" disabled><CopyIcon /></IconButton>
        <IconButton aria-label="粘贴" disabled><PasteIcon /></IconButton>
        <IconButton aria-label="撤消" disabled><UndoIcon /></IconButton>
        <IconButton aria-label="重做" disabled><UndoIcon flip /></IconButton>
        <IconButton aria-label="帮助"><HelpIcon /></IconButton>
      </QuickAccess>
    </TitleBar>
    <Ribbon>
      <RibbonSection $pad={[2, 3]} $rule={2}>
        <RibbonButtons>
          <RibbonButton $width={55}><NewIcon />新建</RibbonButton>
          <RibbonButton $width={55}><OpenIcon />打开<Caret /></RibbonButton>
          <RibbonButton $width={55}><SaveIcon />保存<Caret /></RibbonButton>
          <RibbonButton $width={55}><CompareIcon />比较</RibbonButton>
        </RibbonButtons>
        <RibbonLabel>文件</RibbonLabel>
      </RibbonSection>
      <RibbonSection $pad={[5, 3]} $rule={2}>
        <RibbonButtons>
          <RibbonButton $width={86}><DetailsIcon />App<br />详细信息</RibbonButton>
          <RibbonButton $width={57}><ShareIcon />共享<Caret $color="#555" /></RibbonButton>
        </RibbonButtons>
        <RibbonLabel>共享</RibbonLabel>
      </RibbonSection>
      <RibbonSection $pad={[11, 11]} $rule={1}>
        <RibbonButtons>
          <RibbonButton $width={74}><RunIcon />运行<Caret /></RibbonButton>
          <RibbonButton $width={74} disabled><StepIcon />步进</RibbonButton>
          <RibbonButton $width={40} disabled><StopIcon />停止</RibbonButton>
        </RibbonButtons>
        <RibbonLabel>运行</RibbonLabel>
      </RibbonSection>
      <RibbonEnd>
        <IconButton aria-label="折叠工具条"><CollapseIcon /></IconButton>
      </RibbonEnd>
    </Ribbon>
  </>
);

const Library = () => (
  <LibraryPanel>
    <PanelTitle $right={19}>
      <TitleText>组件库</TitleText>
      <IconButton aria-label="组件库菜单"><PanelMenuIcon /></IconButton>
    </PanelTitle>
    <LibraryBody>
      <LibraryScroll>
        <LibraryTools>
          <Search label="搜索组件" />
          <ViewButton $gap={8} aria-label="列表视图" aria-pressed="false"><ListViewIcon /></ViewButton>
          <ViewButton $gap={3} aria-label="网格视图" aria-pressed="true"><GridViewIcon /></ViewButton>
        </LibraryTools>
        {GROUPS.map((group) => (
          <React.Fragment key={group.title}>
            <GroupTitle>{group.title}</GroupTitle>
            <GroupGrid $height={group.height}>
              {group.items.map(([name, Icon]) => (
                <Tile key={name}>
                  <Icon />
                  {name}
                </Tile>
              ))}
            </GroupGrid>
          </React.Fragment>
        ))}
      </LibraryScroll>
      <ScrollBar>
        <ScrollArrow $up aria-label="向上滚动"><Caret $color="#a0a0a0" /></ScrollArrow>
        <ScrollThumb />
        <ScrollRest />
        <ScrollArrow aria-label="向下滚动"><Caret $color="#505050" /></ScrollArrow>
      </ScrollBar>
    </LibraryBody>
    <StatusBar>
      <IconButton aria-label="折叠组件库"><CollapseIcon turn={-90} /></IconButton>
    </StatusBar>
  </LibraryPanel>
);

const DesignEditor = () => {
  const [mode, setMode] = useState('设计视图');

  return (
    <Editor>
      <DocTabs>
        <DocGrip />
        <DocTab>
          <TitleText>app1.mlapp</TitleText>
          <IconButton aria-label="关闭">
            <Svg size={12} box="0 0 12 12">
              <path d="M1.5 1.5 L10.5 10.5 M10.5 1.5 L1.5 10.5" stroke="#aaa" strokeWidth="2.6" />
            </Svg>
          </IconButton>
        </DocTab>
        <DocRest>
          <IconButton aria-label="新建">
            <Svg size={18} box="0 0 18 18">
              <path d="M9 1 V17 M1 9 H17" stroke="#404040" strokeWidth="4" />
            </Svg>
          </IconButton>
          <IconButton aria-label="文档菜单"><PanelMenuIcon /></IconButton>
        </DocRest>
      </DocTabs>
      <DocHeader>
        MATLAB App
        <ModeSwitch>
          {['设计视图', '代码视图'].map((name) => (
            <ModeButton key={name} $active={mode === name} onClick={() => setMode(name)}>{name}</ModeButton>
          ))}
        </ModeSwitch>
      </DocHeader>
      <Canvas>
        <Figure><GripIcon /></Figure>
      </Canvas>
      <ZoomButton aria-label="缩放"><ZoomIcon /></ZoomButton>
    </Editor>
  );
};

const TextProperty = ({ id, label, value = '' }) => (
  <Property>
    <label htmlFor={id}>{label}</label>
    <ValueSlot><ValueInput id={id} type="text" defaultValue={value} /></ValueSlot>
  </Property>
);

const More = () => (
  <MoreButton aria-label="更多"><i /><i /><i /></MoreButton>
);

const Browser = () => (
  <BrowserPanel>
    <PanelTitle $right={18}>
      <TitleText>组件浏览器</TitleText>
      <IconButton aria-label="组件浏览器菜单"><PanelMenuIcon /></IconButton>
    </PanelTitle>
    <BrowserTools>
      <Search label="搜索组件浏览器" />
      <FilterLabel>视图:</FilterLabel>
      <FilterButton aria-label="视图" aria-haspopup="menu"><LayersIcon /><Caret $color="#444" /></FilterButton>
    </BrowserTools>
    <Tree role="tree">
      <TreeItem role="treeitem" aria-selected="true" $selected $indent={9}>
        <Caret $color="#666" />
        <AppFileIcon />
        app1
      </TreeItem>
      <TreeItem role="treeitem" aria-selected="false" $indent={55}>app.UIFigure</TreeItem>
    </Tree>
    <InspectorTabs>
      <InspectorTab $active>App</InspectorTab>
      <InspectorTab>回调</InspectorTab>
    </InspectorTabs>
    <InspectorTools>
      <Search label="搜索属性" />
      <SquareButton $active aria-label="按类别"><CategoryIcon /></SquareButton>
      <SquareButton aria-label="按字母顺序"><SortIcon /></SquareButton>
    </InspectorTools>
    <Category><Caret $color="#111" />共享详细信息</Category>
    <Properties $height={183}>
      <PropertyList>
        <TextProperty id="name" label="名称" value="app1" />
        <TextProperty id="version" label="版本" value="1.0" />
        <TextProperty id="author" label="作者" />
        <TextProperty id="summary" label="摘要" />
        <TextProperty id="description" label="描述" />
      </PropertyList>
      <More />
    </Properties>
    <Category><Caret $color="#111" />代码选项</Category>
    <Properties $height={71}>
      <PropertyList>
        <Property>
          <label htmlFor="single">单个运行实例</label>
          <ValueSlot><Tick id="single" type="checkbox" /></ValueSlot>
        </Property>
        <TextProperty id="args" label="输入参数" />
      </PropertyList>
      <More />
    </Properties>
    <StatusBar $end>
      <Credit>CSDN @师弟wen</Credit>
      <IconButton aria-label="折叠组件浏览器"><CollapseIcon turn={90} /></IconButton>
    </StatusBar>
  </BrowserPanel>
);

const App = () => (
  <Page>
    <GlobalStyle />
    <TopRibbon />
    <Main>
      <Library />
      <DesignEditor />
      <Browser />
    </Main>
  </Page>
);

export default App;
